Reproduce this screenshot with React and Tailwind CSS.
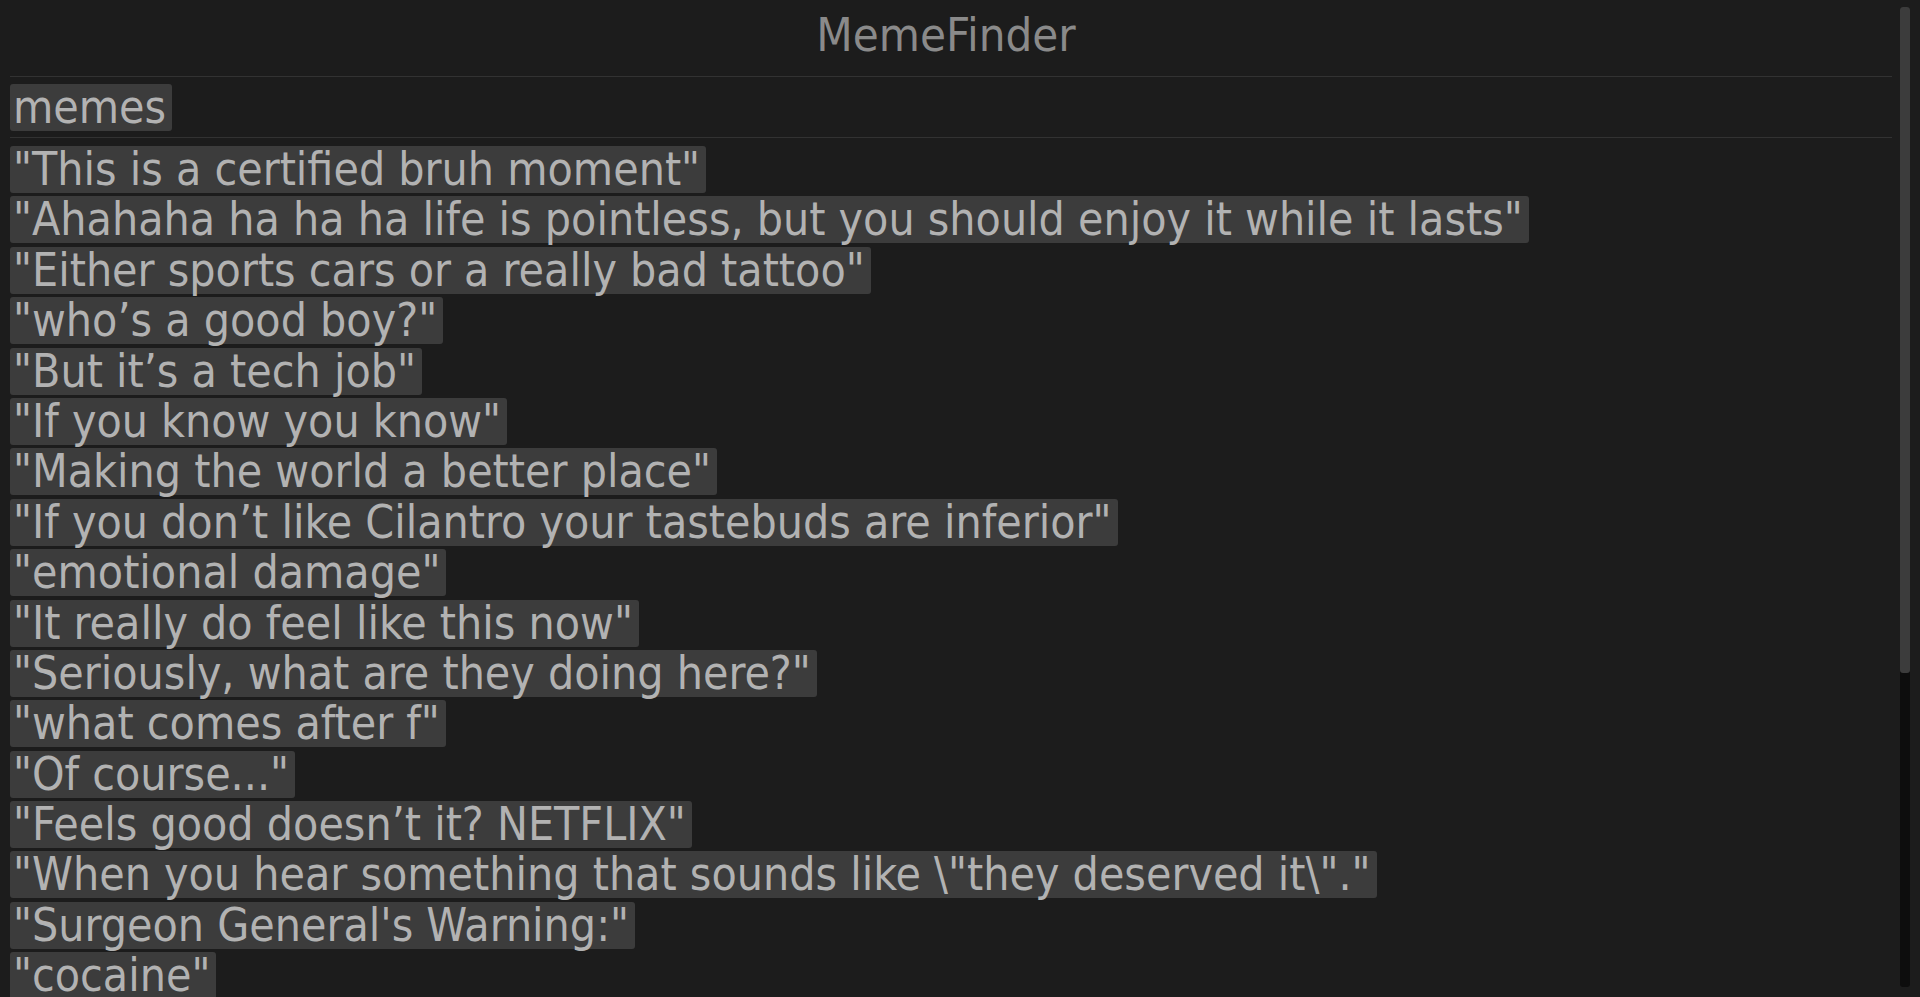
const memes = [
  '"This is a certified bruh moment"',
  '"Ahahaha ha ha ha life is pointless, but you should enjoy it while it lasts"',
  '"Either sports cars or a really bad tattoo"',
  '"who’s a good boy?"',
  '"But it’s a tech job"',
  '"If you know you know"',
  '"Making the world a better place"',
  '"If you don’t like Cilantro your tastebuds are inferior"',
  '"emotional damage"',
  '"It really do feel like this now"',
  '"Seriously, what are they doing here?"',
  '"what comes after f"',
  '"Of course..."',
  '"Feels good doesn’t it? NETFLIX"',
  '"When you hear something that sounds like \\"they deserved it\\"."',
  '"Surgeon General\'s Warning:"',
  '"cocaine"',
  '"Task failed successfully"',
  '"Stonks"',
  '"This is fine"',
  '"Visible confusion"',
  '"It’s free real estate"',
  '"Modern problems require modern solutions"',
  '"I am once again asking"',
  '"Not the bees!"',
  '"Outstanding move"',
];

const Tag = (props) => {
  const { children } = props;
  return (
    <div className="h-[47px] w-fit rounded-[3px] bg-[#3c3c3c] pl-[3px] pr-[6px] text-[46px] leading-[47px] whitespace-nowrap text-[#b2b2b2]">
      {children}
    </div>
  );
};

// fake scrollbar, the headless browser hides the native one
const ScrollBar = () => {
  return (
    <div className="absolute top-[7px] right-[10px] bottom-[10px] w-[10px] rounded-[3px] bg-[#0d0d0d]">
      <div className="h-[666px] rounded-[3px] bg-[#3c3c3c]" />
    </div>
  );
};

const App = () => {
  return (
    <div className="relative h-screen overflow-hidden bg-[#1c1c1c] font-['DejaVu_Sans_Condensed','DejaVu_Sans',sans-serif]">
      <div className="h-full w-[1892px] overflow-y-auto [scrollbar-width:none]">
        <h1 className="flex h-[76px] items-center justify-center pb-[5px] text-[47px] text-[#8a8a8a]">
          MemeFinder
        </h1>
        <div className="ml-[10px] border-t border-[#323232] pt-[7px] pb-[6px]">
          <Tag>memes</Tag>
        </div>
        <div className="ml-[10px] flex flex-col items-start gap-[3.4px] border-t border-[#323232] pt-[8px] pb-[10px]">
          {memes.map((m, i) => (
            <Tag key={i}>{m}</Tag>
          ))}
        </div>
      </div>
      <ScrollBar />
    </div>
  );
};

export default App;
